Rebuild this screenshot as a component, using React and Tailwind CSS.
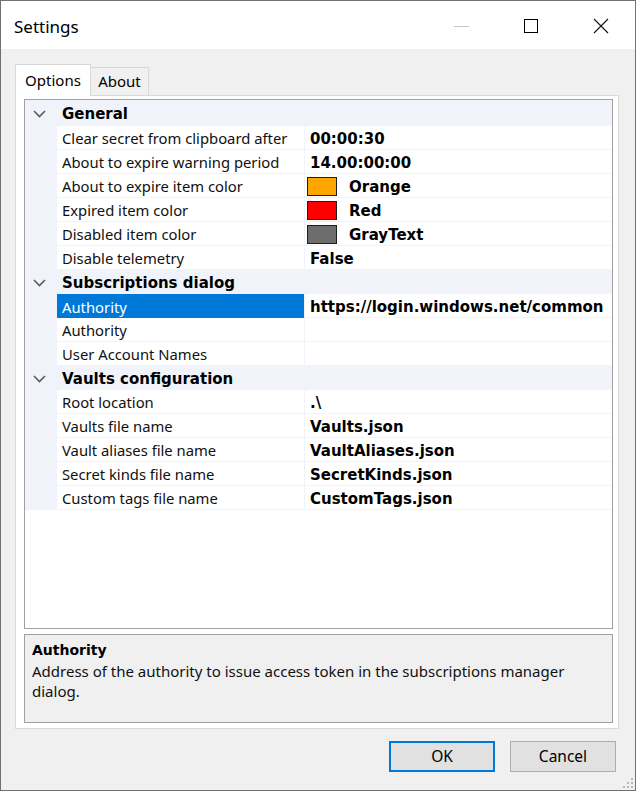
import React from "react";

const NAME_FONT = "font-['Noto_Sans',sans-serif]";
const BOLD_FONT = "font-['DejaVu_Sans',sans-serif] font-bold";

function Chevron() {
  return (
    <svg width="13" height="8" viewBox="0 0 13 8">
      <polyline points="1,1 6.5,6.5 12,1" fill="none" stroke="#5a5a5a" strokeWidth="1.6" />
    </svg>
  );
}

function Category({ label, first }) {
  return (
    <div className={`flex items-center bg-[#f0f4fa] ${first ? "h-[26px]" : "h-[24px]"}`}>
      <div className="w-[32px] shrink-0 pl-[8px] pt-[2px] flex items-center">
        <Chevron />
      </div>
      <span className={`pl-[5px] pt-[3px] ${BOLD_FONT} text-[15px] text-black`}>{label}</span>
    </div>
  );
}

function Prop({ name, value, swatch, selected }) {
  return (
    <div className="flex h-[24px] bg-[#f0f4fa]">
      <div className="w-[32px] shrink-0" />
      <div
        className={`w-[247px] shrink-0 flex items-center pl-[5px] pt-[2px] ${NAME_FONT} text-[14.8px] ${
          selected ? "bg-[#0078d7] text-white" : "bg-white text-[#111] mb-[1px]"
        }`}
      >
        {name}
      </div>
      <div className="w-[1px] shrink-0" />
      <div className="flex-1 mb-[1px] bg-white flex items-center">
        {swatch ? (
          <div className="flex items-center pl-[2px] pt-[1px]">
            <div className={`w-[30px] h-[19px] border border-[#1e1e1e] ${swatch}`} />
            <span className={`ml-[12px] pt-[2px] ${BOLD_FONT} text-[15px] text-black`}>{value}</span>
          </div>
        ) : (
          <span className={`pl-[5px] pt-[3px] ${BOLD_FONT} text-[15px] text-black whitespace-nowrap`}>{value}</span>
        )}
      </div>
    </div>
  );
}

export default function App() {
  return (
    <div className="relative w-[636px] h-[791px] border border-[#707070] bg-[#f0f0f0] flex flex-col overflow-hidden">
      {/* Title bar */}
      <div className="h-[48px] bg-white flex items-center shrink-0">
        <span className={`pl-[13px] pt-[3px] ${NAME_FONT} text-[17px] text-black flex-1`}>Settings</span>
        <div className="w-[70px] h-full flex items-center justify-center pt-[2px]">
          <div className="w-[15px] h-[1px] bg-[#c4c4c4]" />
        </div>
        <div className="w-[70px] h-full flex items-center justify-center pt-[2px]">
          <div className="w-[14px] h-[14px] border border-black" />
        </div>
        <div className="w-[69px] h-full flex items-center justify-center pt-[2px]">
          <svg width="16" height="16" viewBox="0 0 16 16">
            <path d="M1 1 L15 15 M15 1 L1 15" stroke="#111" strokeWidth="1.1" fill="none" />
          </svg>
        </div>
      </div>

      {/* Tabs */}
      <div className={`flex items-end pl-[14px] mt-[15px] h-[31px] ${NAME_FONT}`}>
        <div className="relative z-10 w-[76px] h-[32px] -mb-[1px] bg-white border border-b-0 border-[#d9d9d9] flex items-center justify-center text-[15px] text-black">
          Options
        </div>
        <div className="w-[58px] h-[28px] bg-[#f0f0f0] border border-l-0 border-b-0 border-[#d9d9d9] flex items-center justify-center text-[15px] text-black">
          About
        </div>
      </div>

      {/* Tab panel */}
      <div className="ml-[14px] w-[604px] h-[634px] border border-[#d9d9d9] bg-white pl-[8px] pr-[5px] pt-[3px] flex flex-col">
        {/* Property grid */}
        <div className="h-[530px] border border-[#a0a0a0] bg-white flex flex-col">
          <Category label="General" first />
          <Prop name="Clear secret from clipboard after" value="00:00:30" />
          <Prop name="About to expire warning period" value="14.00:00:00" />
          <Prop name="About to expire item color" value="Orange" swatch="bg-[#ffa500]" />
          <Prop name="Expired item color" value="Red" swatch="bg-[#ff0000]" />
          <Prop name="Disabled item color" value="GrayText" swatch="bg-[#6d6d6d]" />
          <Prop name="Disable telemetry" value="False" />
          <Category label="Subscriptions dialog" />
          <Prop name="Authority" value="https://login.windows.net/common" selected />
          <Prop name="Authority" value="" />
          <Prop name="User Account Names" value="" />
          <Category label="Vaults configuration" />
          <Prop name="Root location" value=".\" />
          <Prop name="Vaults file name" value="Vaults.json" />
          <Prop name="Vault aliases file name" value="VaultAliases.json" />
          <Prop name="Secret kinds file name" value="SecretKinds.json" />
          <Prop name="Custom tags file name" value="CustomTags.json" />
        </div>

        {/* Description */}
        <div className="mt-[5px] h-[89px] border border-[#a0a0a0] bg-[#f0f0f0] px-[7px] pt-[4px]">
          <div className={`${BOLD_FONT} text-[14px] leading-[22px] text-black`}>Authority</div>
          <div className={`${NAME_FONT} text-[15px] leading-[20px] text-[#111]`}>
            Address of the authority to issue access token in the subscriptions manager dialog.
          </div>
        </div>
      </div>

      {/* Buttons */}
      <div className={`mt-[12px] flex justify-end pr-[19px] gap-[15px] ${NAME_FONT}`}>
        <div className="w-[106px] h-[31px] border-2 border-[#0078d7] bg-[#e1e1e1] flex items-center justify-center text-[15.5px] text-black">
          OK
        </div>
        <div className="w-[106px] h-[31px] border border-[#adadad] bg-[#e1e1e1] flex items-center justify-center text-[15.5px] text-black">
          Cancel
        </div>
      </div>

      {/* Resize grip */}
      <svg className="absolute right-[2px] bottom-[2px]" width="10" height="10" viewBox="0 0 10 10">
        <rect x="8" y="0" width="2" height="2" fill="#b8b8b8" />
        <rect x="4" y="4" width="2" height="2" fill="#b8b8b8" />
        <rect x="8" y="4" width="2" height="2" fill="#b8b8b8" />
        <rect x="0" y="8" width="2" height="2" fill="#b8b8b8" />
        <rect x="4" y="8" width="2" height="2" fill="#b8b8b8" />
        <rect x="8" y="8" width="2" height="2" fill="#b8b8b8" />
      </svg>
    </div>
  );
}
